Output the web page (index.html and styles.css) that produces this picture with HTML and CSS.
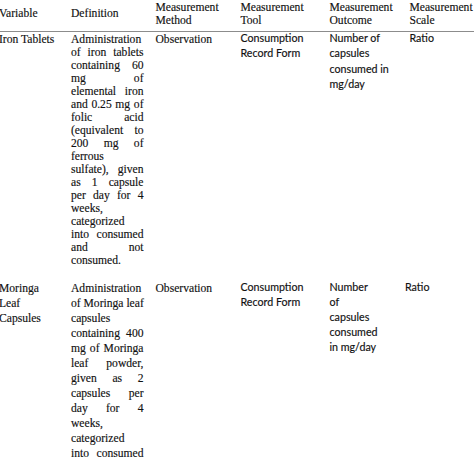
FILE: index.html
```html
<!DOCTYPE html>
<html>
<head>
<meta charset="utf-8">
<link rel="stylesheet" href="styles.css">
</head>
<body>
<div class="table">
  <div class="row head">
    <div class="cell">Variable</div>
    <div class="cell">Definition</div>
    <div class="cell">Measurement<br>Method</div>
    <div class="cell">Measurement<br>Tool</div>
    <div class="cell">Measurement<br>Outcome</div>
    <div class="cell">Measurement<br>Scale</div>
  </div>
  <div class="row body r1">
    <div class="cell serif">Iron Tablets</div>
    <div class="cell serif def">
      <span class="ln">Administration</span>
      <span class="ln">of iron tablets</span>
      <span class="ln">containing 60</span>
      <span class="ln">mg of</span>
      <span class="ln">elemental iron</span>
      <span class="ln">and 0.25 mg of</span>
      <span class="ln">folic acid</span>
      <span class="ln">(equivalent to</span>
      <span class="ln">200 mg of</span>
      <span class="ln">ferrous</span>
      <span class="ln">sulfate), given</span>
      <span class="ln">as 1 capsule</span>
      <span class="ln">per day for 4</span>
      <span class="ln">weeks,</span>
      <span class="ln">categorized</span>
      <span class="ln">into consumed</span>
      <span class="ln">and not</span>
      <span class="ln">consumed.</span>
    </div>
    <div class="cell serif">Observation</div>
    <div class="cell sans">Consumption<br>Record Form</div>
    <div class="cell sans">Number of<br>capsules<br>consumed in<br>mg/day</div>
    <div class="cell sans">Ratio</div>
  </div>
  <div class="row body r2">
    <div class="cell serif">Moringa<br>Leaf<br>Capsules</div>
    <div class="cell serif def">
      <span class="ln">Administration</span>
      <span class="ln">of Moringa leaf</span>
      <span class="ln">capsules</span>
      <span class="ln">containing 400</span>
      <span class="ln">mg of Moringa</span>
      <span class="ln">leaf powder,</span>
      <span class="ln">given as 2</span>
      <span class="ln">capsules per</span>
      <span class="ln">day for 4</span>
      <span class="ln">weeks,</span>
      <span class="ln">categorized</span>
      <span class="ln">into consumed</span>
    </div>
    <div class="cell serif">Observation</div>
    <div class="cell sans">Consumption<br>Record Form</div>
    <div class="cell sans">Number<br>of<br>capsules<br>consumed<br>in mg/day</div>
    <div class="cell sans">Ratio</div>
  </div>
</div>
</body>
</html>
```

FILE: styles.css
```css
html, body {
  margin: 0;
  padding: 0;
  background: #ffffff;
  overflow: hidden;
  height: 462px;
}

.table {
  margin-left: -1px;
  color: #111111;
  font-family: "Liberation Serif", "Times New Roman", serif;
  font-size: 11.6px;
  -webkit-text-stroke: 0.15px #111111;
}

.row {
  display: grid;
  grid-template-columns: 72px 84.5px 85px 89px 80px 1fr;
}

.head {
  height: 27px;
  align-items: center;
  line-height: 13px;
  padding-bottom: 4px;
  border-bottom: 1.5px solid #8c8c8c;
}

.body {
  align-items: start;
}

.r1 .serif {
  line-height: 13px;
  padding-top: 1px;
}

.r1 .sans {
  line-height: 15.3px;
  margin-top: -2px;
}

.r2 {
  margin-top: 14px;
  grid-template-columns: 72px 84.5px 85px 89px 75.5px 1fr;
}

.r2 .serif {
  line-height: 15px;
}

.r2 .sans {
  line-height: 15px;
  margin-top: -2px;
}

.serif {
  font-family: "Liberation Serif", "Times New Roman", serif;
}

.sans {
  font-family: Lato, "Liberation Sans", sans-serif;
  font-size: 10.7px;
}

.def {
  width: 72.5px;
}

.ln {
  display: block;
  text-align: justify;
  text-align-last: justify;
  white-space: nowrap;
}
```
